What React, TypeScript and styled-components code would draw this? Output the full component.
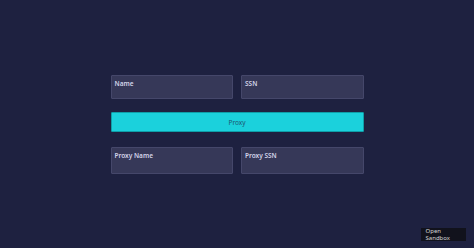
import React from 'react';
import styled, { createGlobalStyle } from 'styled-components';

const GlobalStyle = createGlobalStyle`
  html, body {
    margin: 0;
    padding: 0;
    background: #1e2140;
    font-family: "Noto Sans", "DejaVu Sans", sans-serif;
  }
`;

const Page = styled.div`
  width: 474px;
  height: 248px;
  display: flex;
  justify-content: center;
  padding-top: 75px;
  box-sizing: border-box;
  position: relative;
`;

const Form = styled.div`
  width: 253px;
  display: flex;
  flex-direction: column;
`;

const Row = styled.div<{ $height: number; $gap: number }>`
  display: grid;
  grid-template-columns: 1fr 1fr;
  column-gap: 8px;
  height: ${(p) => p.$height}px;
  margin-bottom: ${(p) => p.$gap}px;
`;

const Field = styled.div`
  background: #363858;
  border: 1px solid #45476a;
  border-radius: 1px;
  box-sizing: border-box;
  padding: 3px 3px;
  font-size: 6.5px;
  font-weight: 600;
  color: #d4d5ea;
  line-height: 9px;
`;

const ProxyButton = styled.button`
  height: 20px;
  margin-bottom: 15px;
  background: #1bd1dc;
  border: 1px solid #0f9fa8;
  border-radius: 1px;
  font-family: inherit;
  font-size: 6.5px;
  color: #1e5670;
  padding: 0;
`;

const Badge = styled.div`
  position: absolute;
  right: 8px;
  bottom: 7px;
  background: #11121c;
  color: #d6d6d6;
  font-size: 6px;
  line-height: 6.5px;
  padding: 0 16px 0 5px;
`;

export default function App() {
  return (
    <>
      <GlobalStyle />
      <Page>
        <Form>
          <Row $height={24} $gap={13}>
            <Field>Name</Field>
            <Field>SSN</Field>
          </Row>
          <ProxyButton>Proxy</ProxyButton>
          <Row $height={27} $gap={0}>
            <Field>Proxy Name</Field>
            <Field>Proxy SSN</Field>
          </Row>
        </Form>
        <Badge>
          Open
          <br />
          Sandbox
        </Badge>
      </Page>
    </>
  );
}
